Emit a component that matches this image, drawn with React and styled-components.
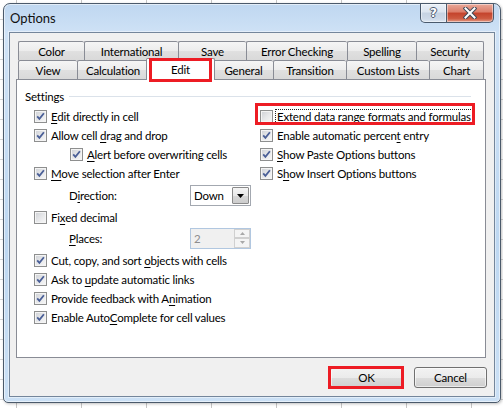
import React from 'react';
import styled, { createGlobalStyle } from 'styled-components';

const GlobalStyle = createGlobalStyle`
  html, body {
    margin: 0;
  }
  body {
    width: 503px;
    height: 408px;
    overflow: hidden;
    font-family: Lato, 'Liberation Sans', sans-serif;
    font-size: 11.5px;
    letter-spacing: -0.2px;
    color: #000;
    background-color: #fff;
    background-image:
      repeating-linear-gradient(90deg, transparent 0, transparent 16px, #c6c6c6 16px, #c6c6c6 17px, transparent 17px, transparent 65px),
      repeating-linear-gradient(180deg, transparent 0, transparent 19px, #d6d6d6 19px, #d6d6d6 20px);
  }
`;

const red = '#ed1c24';

const Window = styled.div`
  box-sizing: border-box;
  margin: 3px 0 0 3px;
  width: 498px;
  height: 400px;
  display: flex;
  flex-direction: column;
  padding: 0 5px 5px;
  border: 1px solid #4b5a6b;
  border-radius: 7px 7px 5px 5px;
  background: linear-gradient(180deg, #bfd7f0 0, #cfe2f6 30px, #bdd7f1 60%, #cbe0f5 100%);
  box-shadow: inset 0 0 0 1px rgba(255, 255, 255, 0.55), 1px 1px 3px rgba(0, 0, 0, 0.25);
`;

const TitleBar = styled.div`
  flex: none;
  height: 28px;
  display: flex;
  align-items: flex-start;
  justify-content: space-between;
`;

const Title = styled.div`
  margin: 6px 0 0 1px;
  font-size: 13px;
  line-height: 16px;
  letter-spacing: 0;
  color: #111;
`;

const Caption = styled.div`
  display: flex;
  margin-right: 1px;
`;

const CaptionButton = styled.div`
  box-sizing: border-box;
  width: ${(p) => p.$w}px;
  height: 19px;
  display: flex;
  align-items: center;
  justify-content: center;
  border: 1px solid #4a5a6d;
  border-top: none;
  border-left: ${(p) => (p.$close ? 'none' : '1px solid #4a5a6d')};
  border-radius: ${(p) => (p.$close ? '0 0 5px 0' : '0 0 0 5px')};
  background: ${(p) =>
    p.$close
      ? 'linear-gradient(180deg, #e9a99a 0, #dc7d69 45%, #c4432c 50%, #cd5a40 80%, #e39a86 100%)'
      : 'linear-gradient(180deg, #eaf0f7 0, #dce5f0 45%, #c6d3e3 50%, #cdd9e8 80%, #dbe5f1 100%)'};
  box-shadow: inset 0 0 0 1px rgba(255, 255, 255, 0.45);
`;

const HelpGlyph = styled.span`
  font-family: 'DejaVu Sans', sans-serif;
  font-weight: bold;
  font-size: 12px;
  line-height: 12px;
  color: #fff;
  text-shadow: -1px 0 #4d5c70, 1px 0 #4d5c70, 0 -1px #4d5c70, 0 1px #4d5c70;
`;

const Client = styled.div`
  box-sizing: border-box;
  flex: 1;
  display: flex;
  flex-direction: column;
  padding: 8px 8px 0 6px;
  border: 1px solid #74869b;
  background: #f0f0f0;
  box-shadow: 0 0 0 1px rgba(255, 255, 255, 0.45);
`;

const TabRows = styled.div`
  flex: none;
  display: flex;
  flex-direction: column;
  margin: 0 2px;
`;

const TabRow = styled.div`
  display: flex;
  height: 19px;
  align-items: flex-start;
`;

const Tab = styled.div`
  box-sizing: border-box;
  position: relative;
  width: ${(p) => p.$w + (p.$active ? 4 : 0)}px;
  height: ${(p) => (p.$active ? 22 : 19)}px;
  margin: ${(p) => (p.$active ? '-2px -2px 0' : '0')};
  z-index: ${(p) => (p.$active ? 2 : 0)};
  display: flex;
  align-items: center;
  justify-content: center;
  padding-bottom: ${(p) => (p.$active ? 1 : 0)}px;
  border: 1px solid #898c95;
  border-bottom: none;
  border-right: ${(p) => (p.$active ? '1px solid #898c95' : 'none')};
  border-radius: 2px 2px 0 0;
  background: ${(p) =>
    p.$active ? '#fff' : 'linear-gradient(180deg, #f5f5f5 0, #ececec 50%, #e0e0e0 51%, #d9d9d9 100%)'};
  white-space: nowrap;

  &:last-child {
    border-right: 1px solid #898c95;
  }

  ${(p) =>
    p.$marked &&
    `
    &::after {
      content: '';
      position: absolute;
      left: 2px;
      right: 2px;
      top: -1px;
      bottom: -2px;
      border: 3px solid ${red};
    }
  `}
`;

const Page = styled.div`
  box-sizing: border-box;
  flex: none;
  height: 279px;
  padding: 8px 8px 0 8px;
  border: 1px solid #898c95;
  background: #fff;
`;

const SectionHead = styled.div`
  display: flex;
  align-items: center;
  height: 16px;
`;

const Rule = styled.div`
  flex: 1;
  height: 1px;
  margin: 0 6px 0 5px;
  background: #dbe2ea;
`;

const Columns = styled.div`
  display: grid;
  grid-template-columns: 226px 1fr;
  align-items: start;
  margin-top: 3px;
  padding-left: 9px;
`;

const Column = styled.div`
  display: flex;
  flex-direction: column;
  align-items: flex-start;
`;

const CheckRow = styled.div`
  position: relative;
  display: flex;
  align-items: center;
  gap: 3px;
  height: ${(p) => p.$h || 19}px;
  margin-top: ${(p) => p.$gap || 0}px;
  padding-left: ${(p) => p.$indent || 0}px;
  white-space: nowrap;

  ${(p) =>
    p.$marked &&
    `
    &::after {
      content: '';
      position: absolute;
      left: -5px;
      right: -3px;
      top: -4px;
      bottom: 1px;
      border: 3px solid ${red};
    }
  `}
`;

const Box = styled.span`
  box-sizing: border-box;
  flex: none;
  width: 13px;
  height: 13px;
  display: flex;
  align-items: center;
  justify-content: center;
  border: 1px solid #8e8f8f;
  background: linear-gradient(135deg, #cdd0d5 0%, #e6e7e9 50%, #f8f8f8 100%);
  box-shadow: inset 0 0 0 1px #f4f4f4;
`;

const Text = styled.span`
  padding: 0 1px;
  outline: ${(p) => (p.$focus ? '1px dotted #222' : 'none')};
`;

const Key = styled.span`
  text-decoration: underline;
  text-underline-offset: 2px;
`;

const FieldRow = styled.div`
  display: flex;
  align-items: center;
  height: ${(p) => p.$h}px;
  padding-left: 35px;
`;

const FieldLabel = styled.span`
  width: 121px;
`;

const Select = styled.div`
  box-sizing: border-box;
  width: 61px;
  height: 21px;
  display: flex;
  border: 1px solid #a3a8b0;
  background: #fff;
`;

const SelectValue = styled.span`
  flex: 1;
  display: flex;
  align-items: center;
  padding-left: 3px;
`;

const DropButton = styled.span`
  box-sizing: border-box;
  width: 17px;
  margin: 1px;
  display: flex;
  align-items: center;
  justify-content: center;
  border: 1px solid #8a8a8a;
  border-radius: 1px;
  background: linear-gradient(180deg, #f4f4f4 0, #e8e8e8 50%, #d8d8d8 51%, #cdcdcd 100%);
`;

const Spin = styled.div`
  box-sizing: border-box;
  width: 61px;
  height: 21px;
  display: flex;
  border: 1px solid #b1c7e0;
  background: #f0f0f0;
  color: #8d8d8d;
`;

const SpinButtons = styled.span`
  width: 16px;
  display: flex;
  flex-direction: column;
`;

const SpinHalf = styled.span`
  box-sizing: border-box;
  flex: 1;
  display: flex;
  align-items: center;
  justify-content: center;
  border: 1px solid #d0d0d0;
  background: #f4f4f4;
`;

const ButtonRow = styled.div`
  flex: none;
  display: flex;
  justify-content: flex-end;
  gap: 11px;
  margin: 9px -1px 0 0;
`;

const Button = styled.button`
  box-sizing: border-box;
  position: relative;
  width: 73px;
  height: 21px;
  padding: 0;
  font: inherit;
  letter-spacing: inherit;
  color: #000;
  border: 1px solid #707070;
  border-radius: 3px;
  background: linear-gradient(180deg, #f2f2f2 0, #ebebeb 50%, #dddddd 51%, #cfcfcf 100%);
  box-shadow: inset 0 0 0 1px rgba(255, 255, 255, 0.6);

  ${(p) =>
    p.$marked &&
    `
    &::after {
      content: '';
      position: absolute;
      left: -3px;
      right: -2px;
      top: -2px;
      bottom: -2px;
      border: 3px solid ${red};
    }
  `}
`;

const accel = (text) => {
  const i = text.indexOf('&');
  if (i < 0) return text;
  return (
    <>
      {text.slice(0, i)}
      <Key>{text[i + 1]}</Key>
      {text.slice(i + 2)}
    </>
  );
};

const Check = ({ checked, label, focus, ...rest }) => (
  <CheckRow {...rest}>
    <Box>
      {checked && (
        <svg width="11" height="11" viewBox="0 0 11 11">
          <path d="M2.2 5.4 L4.4 7.9 L8.9 2.2" fill="none" stroke="#4a5f97" strokeWidth="1.8" />
        </svg>
      )}
    </Box>
    <Text $focus={focus}>{accel(label)}</Text>
  </CheckRow>
);

const topTabs = [
  ['Color', 66],
  ['International', 94],
  ['Save', 68],
  ['Error Checking', 101],
  ['Spelling', 69],
  ['Security', 68],
];

const bottomTabs = [
  ['View', 59],
  ['Calculation', 71],
  ['Edit', 65, true],
  ['General', 60],
  ['Transition', 73],
  ['Custom Lists', 83],
  ['Chart', 55],
];

const Triangle = ({ up, color = '#000', w = 7 }) => (
  <svg width={w} height={Math.ceil(w / 2)} viewBox={`0 0 ${w} ${Math.ceil(w / 2)}`}>
    <path
      d={up ? `M0 ${Math.ceil(w / 2)} L${w / 2} 0 L${w} ${Math.ceil(w / 2)} Z` : `M0 0 L${w} 0 L${w / 2} ${Math.ceil(w / 2)} Z`}
      fill={color}
    />
  </svg>
);

export default function App() {
  return (
    <>
      <GlobalStyle />
      <Window>
        <TitleBar>
          <Title>Options</Title>
          <Caption>
            <CaptionButton $w={27}>
              <HelpGlyph>?</HelpGlyph>
            </CaptionButton>
            <CaptionButton $w={47} $close>
              <svg width="14" height="12" viewBox="0 0 14 12">
                <path d="M2.5 1.5 L11.5 10.5 M11.5 1.5 L2.5 10.5" stroke="#3f4a58" strokeWidth="4" strokeLinecap="square" />
                <path d="M2.5 1.5 L11.5 10.5 M11.5 1.5 L2.5 10.5" stroke="#fff" strokeWidth="2" strokeLinecap="square" />
              </svg>
            </CaptionButton>
          </Caption>
        </TitleBar>

        <Client>
          <TabRows>
            <TabRow>
              {topTabs.map(([name, w]) => (
                <Tab key={name} $w={w}>
                  {name}
                </Tab>
              ))}
            </TabRow>
            <TabRow>
              {bottomTabs.map(([name, w, active]) => (
                <Tab key={name} $w={w} $active={active} $marked={active}>
                  {name}
                </Tab>
              ))}
            </TabRow>
          </TabRows>

          <Page>
            <SectionHead>
              Settings
              <Rule />
            </SectionHead>
            <Columns>
              <Column>
                <Check checked label="&Edit directly in cell" />
                <Check checked label="Allow cell &drag and drop" />
                <Check checked label="&Alert before overwriting cells" $indent={36} />
                <Check checked label="&Move selection after Enter" />
                <FieldRow $h={25}>
                  <FieldLabel>{accel('D&irection:')}</FieldLabel>
                  <Select>
                    <SelectValue>Down</SelectValue>
                    <DropButton>
                      <Triangle />
                    </DropButton>
                  </Select>
                </FieldRow>
                <Check label="Fi&xed decimal" />
                <FieldRow $h={22}>
                  <FieldLabel>{accel('&Places:')}</FieldLabel>
                  <Spin>
                    <SelectValue>2</SelectValue>
                    <SpinButtons>
                      <SpinHalf>
                        <Triangle up w={5} color="#a8a8a8" />
                      </SpinHalf>
                      <SpinHalf>
                        <Triangle w={5} color="#a8a8a8" />
                      </SpinHalf>
                    </SpinButtons>
                  </Spin>
                </FieldRow>
                <Check checked label="Cut, copy, and sort &objects with cells" $gap={2} />
                <Check checked label="Ask to &update automatic links" />
                <Check checked label="Provide feedback with A&nimation" />
                <Check checked label="Enable Auto&Complete for cell values" />
              </Column>
              <Column>
                <Check label="Extend data range formats and formu&las" focus $marked />
                <Check checked label="Enable automatic percen&t entry" />
                <Check checked label="&Show Paste Options buttons" />
                <Check checked label="S&how Insert Options buttons" />
              </Column>
            </Columns>
          </Page>

          <ButtonRow>
            <Button $marked>OK</Button>
            <Button>Cancel</Button>
          </ButtonRow>
        </Client>
      </Window>
    </>
  );
}
